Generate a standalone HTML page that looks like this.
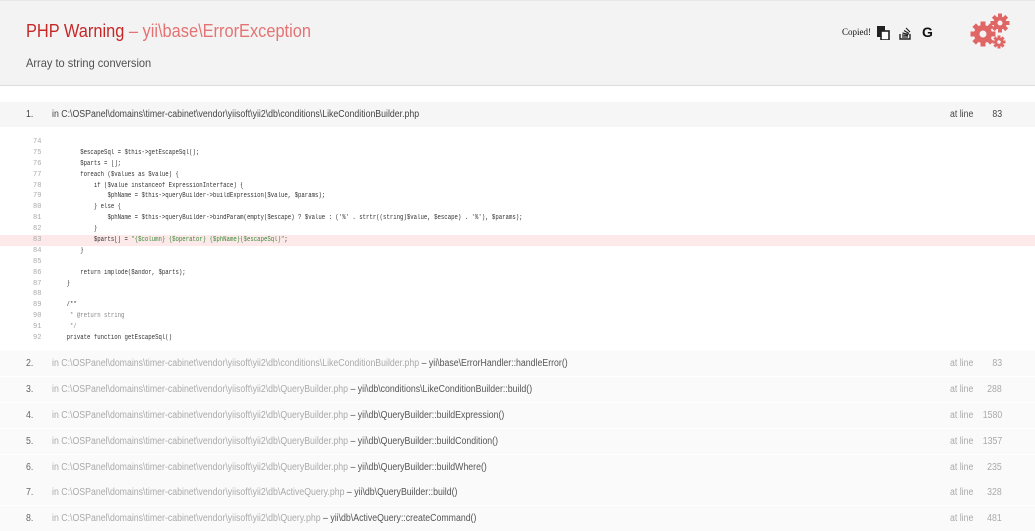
<!DOCTYPE html>
<html><head><meta charset="utf-8"><style>
*{margin:0;padding:0;box-sizing:border-box}
body{width:1035px;height:525px;overflow:hidden;background:#fff;font-family:"Liberation Sans",sans-serif;position:relative}
.hdr{position:absolute;left:0;top:0;width:1035px;height:86px;background:#f3f3f3;border-bottom:1px solid #ddd;border-top:1px solid #e8e8e8}
.t{position:absolute;left:26px;top:20px;font-size:18px;color:#e57373;white-space:nowrap;transform:scaleX(.91);transform-origin:left}
.t b{font-weight:normal;color:#c62828}
.m{position:absolute;left:26px;top:55px;font-size:12px;color:#505050;white-space:nowrap;transform:scaleX(.92);transform-origin:left}
.row{position:absolute;left:0;width:1035px;height:25px;background:#fafafa;font-size:10px;color:#aaa;white-space:nowrap}
.row span{position:absolute;top:7px;transform:scaleX(.876);transform-origin:left}
.n{left:26px;color:#666}
.f{left:52px}
.f i{font-style:normal;color:#555}
.al{left:950px}
.row span.ln{right:33px;text-align:right;transform-origin:right}
.r1{top:102px;background:#f6f6f6;color:#333}
.r1 .f,.r1 .al,.r1 .ln,.r1 .n{color:#444}
.code{position:absolute;left:0;top:137px;width:1035px;font-family:"Liberation Mono",monospace;font-size:7px;color:#333}
.code div{height:10.9px;line-height:10.9px;white-space:pre;position:relative}
.code div s{position:absolute;left:33px;text-decoration:none;color:#aaa}
.code div em{position:absolute;left:53px;font-style:normal;transform:scaleX(.81);transform-origin:left}
.code .hl{background:#fde9e9}
.g{color:#3a8a3a}
.ic{position:absolute;top:26px;font-size:9px;font-family:"Liberation Serif",serif;color:#111}
</style></head><body>
<div class="hdr">
<div class="t"><b>PHP Warning</b> – yii\base\ErrorException</div>
<div class="m">Array to string conversion</div>
<div class="ic" style="left:842px">Copied!</div>
<svg style="position:absolute;left:876px;top:25px" width="14" height="14" viewBox="0 0 14 14"><rect x="1" y="0" width="8" height="11" fill="#222"/><rect x="5" y="5" width="8" height="9" fill="#fff" stroke="#222" stroke-width="1.6"/></svg>
<svg style="position:absolute;left:899px;top:25px" width="13" height="14" viewBox="0 0 13 14"><path d="M1 8v5h10V8" fill="none" stroke="#222" stroke-width="1.4"/><path d="M3 11h6M3 9l6 .5M3.5 7l6 1.5M5 4.5l5 3M7 2l4 4" stroke="#222" stroke-width="1.2"/></svg>
<div style="position:absolute;left:922px;top:23px;font-size:14px;font-weight:bold;color:#111">G</div>
<svg style="position:absolute;left:965px;top:12px" width="50" height="40" viewBox="0 0 50 40">
<g fill="#e06666">
<g transform="translate(18,21)"><circle r="9"/><g><rect x="-2.5" y="-12.5" width="5" height="25"/><rect x="-2.5" y="-12.5" width="5" height="25" transform="rotate(45)"/><rect x="-2.5" y="-12.5" width="5" height="25" transform="rotate(90)"/><rect x="-2.5" y="-12.5" width="5" height="25" transform="rotate(135)"/></g><circle r="3.5" fill="#f3f3f3"/></g>
<g transform="translate(35,10)"><circle r="6.5"/><rect x="-2" y="-9.5" width="4" height="19"/><rect x="-2" y="-9.5" width="4" height="19" transform="rotate(45)"/><rect x="-2" y="-9.5" width="4" height="19" transform="rotate(90)"/><rect x="-2" y="-9.5" width="4" height="19" transform="rotate(135)"/><circle r="2.5" fill="#f3f3f3"/></g>
<g transform="translate(34,29)"><circle r="4.5"/><rect x="-1.5" y="-6.5" width="3" height="13"/><rect x="-1.5" y="-6.5" width="3" height="13" transform="rotate(45)"/><rect x="-1.5" y="-6.5" width="3" height="13" transform="rotate(90)"/><rect x="-1.5" y="-6.5" width="3" height="13" transform="rotate(135)"/><circle r="1.8" fill="#f3f3f3"/></g>
</g></svg>
</div>

<div class="row r1"><span class="n">1.</span><span class="f">in C:\OSPanel\domains\timer-cabinet\vendor\yiisoft\yii2\db\conditions\LikeConditionBuilder.php</span><span class="al">at line</span><span class="ln">83</span></div>

<div class="code">
<div><s>74</s></div>
<div><s>75</s><em>        $escapeSql = $this->getEscapeSql();</em></div>
<div><s>76</s><em>        $parts = [];</em></div>
<div><s>77</s><em>        foreach ($values as $value) {</em></div>
<div><s>78</s><em>            if ($value instanceof ExpressionInterface) {</em></div>
<div><s>79</s><em>                $phName = $this->queryBuilder->buildExpression($value, $params);</em></div>
<div><s>80</s><em>            } else {</em></div>
<div><s>81</s><em>                $phName = $this->queryBuilder->bindParam(empty($escape) ? $value : ('%' . strtr((string)$value, $escape) . '%'), $params);</em></div>
<div><s>82</s><em>            }</em></div>
<div class="hl"><s>83</s><em>            $parts[] = <span class="g">"{$column} {$operator} {$phName}{$escapeSql}"</span>;</em></div>
<div><s>84</s><em>        }</em></div>
<div><s>85</s></div>
<div><s>86</s><em>        return implode($andor, $parts);</em></div>
<div><s>87</s><em>    }</em></div>
<div><s>88</s></div>
<div><s>89</s><em>    /**</em></div>
<div><s>90</s><em style="color:#888">     * @return string</em></div>
<div><s>91</s><em style="color:#888">     */</em></div>
<div><s>92</s><em>    private function getEscapeSql()</em></div>
</div>

<div class="row" style="top:351px"><span class="n">2.</span><span class="f">in C:\OSPanel\domains\timer-cabinet\vendor\yiisoft\yii2\db\conditions\LikeConditionBuilder.php <i>– yii\base\ErrorHandler::handleError()</i></span><span class="al">at line</span><span class="ln">83</span></div>
<div class="row" style="top:377px"><span class="n">3.</span><span class="f">in C:\OSPanel\domains\timer-cabinet\vendor\yiisoft\yii2\db\QueryBuilder.php <i>– yii\db\conditions\LikeConditionBuilder::build()</i></span><span class="al">at line</span><span class="ln">288</span></div>
<div class="row" style="top:403px"><span class="n">4.</span><span class="f">in C:\OSPanel\domains\timer-cabinet\vendor\yiisoft\yii2\db\QueryBuilder.php <i>– yii\db\QueryBuilder::buildExpression()</i></span><span class="al">at line</span><span class="ln">1580</span></div>
<div class="row" style="top:429px"><span class="n">5.</span><span class="f">in C:\OSPanel\domains\timer-cabinet\vendor\yiisoft\yii2\db\QueryBuilder.php <i>– yii\db\QueryBuilder::buildCondition()</i></span><span class="al">at line</span><span class="ln">1357</span></div>
<div class="row" style="top:455px"><span class="n">6.</span><span class="f">in C:\OSPanel\domains\timer-cabinet\vendor\yiisoft\yii2\db\QueryBuilder.php <i>– yii\db\QueryBuilder::buildWhere()</i></span><span class="al">at line</span><span class="ln">235</span></div>
<div class="row" style="top:480px"><span class="n">7.</span><span class="f">in C:\OSPanel\domains\timer-cabinet\vendor\yiisoft\yii2\db\ActiveQuery.php <i>– yii\db\QueryBuilder::build()</i></span><span class="al">at line</span><span class="ln">328</span></div>
<div class="row" style="top:506px"><span class="n">8.</span><span class="f">in C:\OSPanel\domains\timer-cabinet\vendor\yiisoft\yii2\db\Query.php <i>– yii\db\ActiveQuery::createCommand()</i></span><span class="al">at line</span><span class="ln">481</span></div>
</body></html>
